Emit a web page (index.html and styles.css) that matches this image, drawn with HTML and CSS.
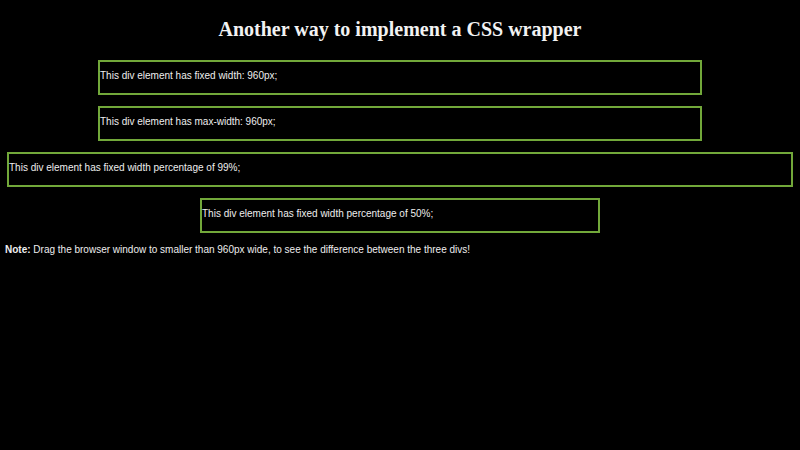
FILE: index.html
```html
<!DOCTYPE html>
<html lang="en">
<head>
<meta charset="utf-8">
<title>CSS wrapper</title>
<link rel="stylesheet" href="styles.css">
</head>
<body>
  <h1 class="title">Another way to implement a CSS wrapper</h1>

  <div class="wrap wrap-fixed">This div element has fixed width: 960px;</div>
  <div class="wrap wrap-max">This div element has max-width: 960px;</div>
  <div class="wrap wrap-99">This div element has fixed width percentage of 99%;</div>
  <div class="wrap wrap-50">This div element has fixed width percentage of 50%;</div>

  <p class="note"><strong>Note:</strong> Drag the browser window to smaller than 960px wide, to see the difference between the three divs!</p>
</body>
</html>
```

FILE: styles.css
```css
html, body {
  background: #000;
}

body {
  margin: 0;
  padding: 5px;
  color: #eee;
  font-family: "Liberation Sans", Arial, sans-serif;
  font-size: 10px;
}

.title {
  margin: 13px 0 19px;
  font-family: "Liberation Serif", "Times New Roman", serif;
  font-size: 20px;
  line-height: 23px;
  font-weight: bold;
  text-align: center;
  color: #f2f2f2;
}

.wrap {
  box-sizing: border-box;
  height: 35px;
  margin: 0 auto 11px;
  padding: 7px 0 11px;
  border: 2px solid #72a83a;
  line-height: 13px;
}

.wrap-fixed {
  width: 604px;
}

.wrap-max {
  max-width: 604px;
}

.wrap-99 {
  width: 786px;
  margin-left: 2px;
}

.wrap-50 {
  width: 400px;
}

.note {
  margin: 10px 0 0;
  line-height: 12px;
}
```
